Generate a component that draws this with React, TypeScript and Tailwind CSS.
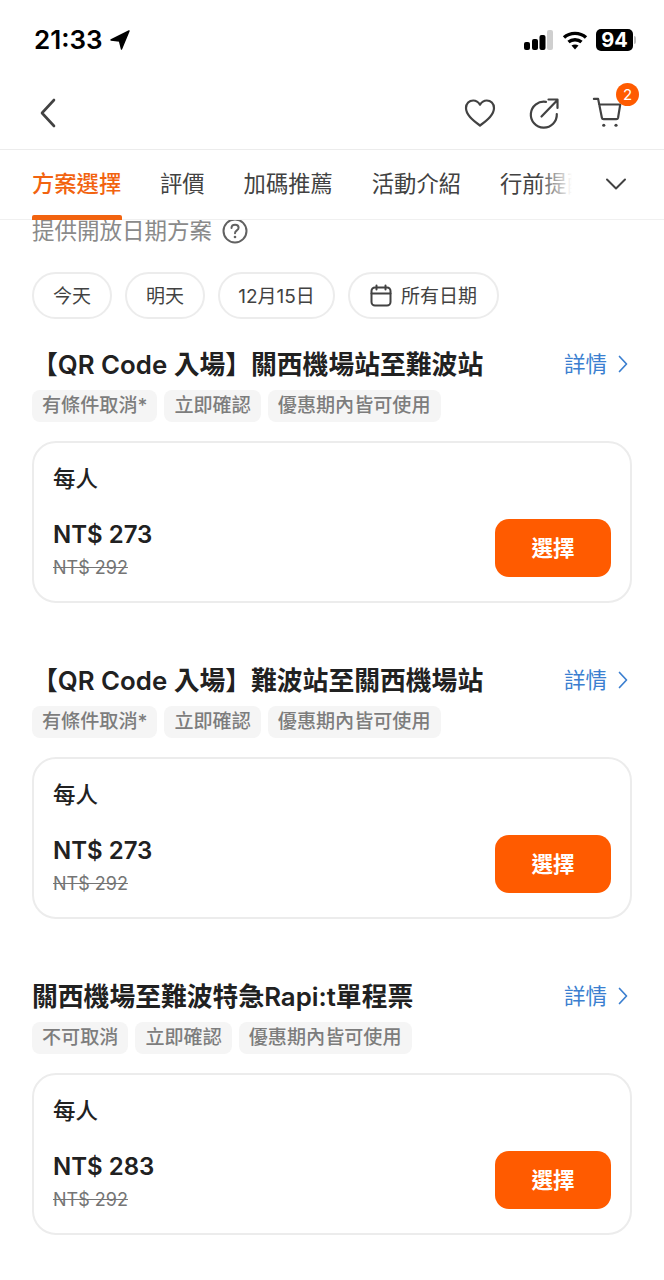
import React from "react";

function Plan({ title, tags, price }: { title: string; tags: string[]; price: string }) {
  return (
    <section className="h-[316px] px-8">
      <div className="flex h-[36px] items-center justify-between">
        <h2 className="text-[25.8px] leading-[36px] font-semibold text-[#212121] whitespace-nowrap">{title}</h2>
        <div className="mr-[4px] flex items-center gap-[11px] text-[#3b7fd0]">
          <span className="-mt-[2px] text-[21.5px] leading-[28px]">詳情</span>
          <svg className="-mt-[2px]" width="10" height="18" viewBox="0 0 10 18" fill="none" stroke="currentColor" strokeWidth="1.7" strokeLinecap="round" strokeLinejoin="round">
            <path d="M1.500 1.500 8.500 9l-7 7.500" />
          </svg>
        </div>
      </div>
      <div className="mt-[7px] flex gap-[7px]">
        {tags.map((t) => (
          <span key={t} className="flex h-[32px] items-center rounded-[8px] bg-[#f5f5f5] px-[10px] text-[19.1px] leading-none font-medium text-[#7d7d7d]">{t}</span>
        ))}
      </div>
      <div className="mt-[19px] flex h-[162px] flex-col rounded-[24px] border-2 border-[#ececec] px-[19px]">
        <div className="mt-[21px] text-[22.5px] leading-[30px] font-medium text-[#212121]">每人</div>
        <div className="mt-[24px] flex items-start justify-between">
          <div className="flex flex-col">
            <span className="mt-[1px] text-[24px] leading-[32px] font-semibold text-[#212121]">{price}</span>
            <span className="mt-[5px] text-[18px] leading-[24px] text-[#757575] line-through">NT$ 292</span>
          </div>
          <button className="mt-[1px] flex h-[58px] w-[116px] items-center justify-center rounded-[14px] bg-[#ff5b00] text-[21.5px] font-semibold text-white">選擇</button>
        </div>
      </div>
    </section>
  );
}

export default function App() {
  return (
    <div className="relative h-[1280px] w-[664px] overflow-hidden bg-white [font-family:Inter,'Noto_Sans_CJK_TC',sans-serif]">
      <div className="flex h-[72px] items-start justify-between pl-[34px] pr-[28px] pt-[22px]">
        <div className="flex items-center gap-[6px]">
          <span className="text-[26px] leading-[36px] font-semibold text-black">21:33</span>
          <svg width="22" height="22" viewBox="0 0 22 22" fill="#000" stroke="#000" strokeWidth="1.400" strokeLinejoin="round"><path d="M20 2 2 11l8.500 1L12.500 20z" /></svg>
        </div>
        <div className="flex items-center gap-[8px] pt-[7px]">
          <svg width="30" height="22" viewBox="0 0 30 22" fill="#000">
            <rect x="0" y="13" width="6" height="8" rx="2" />
            <rect x="8" y="10" width="6" height="11" rx="2" />
            <rect x="15.500" y="6" width="6" height="15" rx="2" />
            <rect x="23" y="1" width="6" height="20" rx="2" fill="#cfcfcf" />
          </svg>
          <svg width="26" height="20" viewBox="0 0 26 20" fill="none" stroke="#000" strokeWidth="3.400">
            <path d="M2 7.500c6-5.500 16-5.500 22 0" />
            <path d="M6.500 12c3.500-3 9.500-3 13 0" />
            <path d="M13 19.500 9.500 15.500c2-1.500 5-1.500 7 0z" fill="#000" stroke="none" />
          </svg>
          <div className="flex items-center">
            <div className="flex h-[22px] w-[37px] items-center justify-center rounded-[5px] bg-black text-[20px] leading-none font-bold text-white">94</div>
            <div className="ml-[1px] h-[8px] w-[2px] rounded-r-sm bg-[#bdbdbd]" />
          </div>
        </div>
      </div>

      <div className="flex h-[78px] items-center justify-between border-b border-[#ececec] pl-[38px] pr-[40px] pt-[4px]">
        <svg width="20" height="30" viewBox="0 0 20 30" fill="none" stroke="#424242" strokeWidth="2.600" strokeLinecap="round" strokeLinejoin="round">
          <path d="M16 2 4 15l12 13" />
        </svg>
        <div className="flex items-center gap-[32px]">
          <svg width="32" height="30" viewBox="0 0 32 30" fill="none" stroke="#424242" strokeWidth="2.200" strokeLinejoin="round">
            <path d="M16 27.500C8 21.500 2 16.500 2 10c0-4.500 3.300-7.500 7.200-7.500 2.800 0 5.200 1.500 6.800 4.200 1.600-2.700 4-4.200 6.800-4.200C26.700 2.500 30 5.500 30 10c0 6.500-6 11.500-14 17.500z" />
          </svg>
          <svg width="32" height="32" viewBox="0 0 32 32" fill="none" stroke="#424242" strokeWidth="2.200" strokeLinecap="round" strokeLinejoin="round">
            <path d="M18 4.800A13 13 0 1 0 28.800 17" />
            <path d="M13.500 19.500 29 3.500M20.500 2.500H29.500V11" />
          </svg>
          <div className="relative h-[32px] w-[32px]">
            <svg width="32" height="32" viewBox="0 0 34 34" fill="none" stroke="#424242" strokeWidth="2.300" strokeLinecap="round" strokeLinejoin="round">
              <path d="M2 2h4.500l4 20c.2 1 .9 1.500 1.800 1.500h13.500c1 0 1.700-.6 1.900-1.500L30 8H7.500" />
              <circle cx="12.500" cy="30" r="1.700" fill="#424242" stroke="none" />
              <circle cx="25.500" cy="30" r="1.700" fill="#424242" stroke="none" />
            </svg>
            <span className="absolute -right-[15px] -top-[14px] flex h-[23px] w-[23px] items-center justify-center rounded-full bg-[#ff5b00] text-[15px] leading-none text-white">2</span>
          </div>
        </div>
      </div>

      <div className="relative z-10 flex h-[70px] items-center border-b border-[#f0f0f0] bg-white pl-8 text-[22.3px] leading-none text-[#424242]">
        <div className="relative flex h-full w-[90px] items-center pb-[1px] font-medium whitespace-nowrap text-[#f2630f]">
          方案選擇
          <span className="absolute -bottom-px left-0 h-[5px] w-full rounded-t-[2px] bg-[#f2630f]" />
        </div>
        <span className="mb-[1px] ml-[38px]">評價</span>
        <span className="mb-[1px] ml-[39px]">加碼推薦</span>
        <span className="mb-[1px] ml-[39px]">活動介紹</span>
        <span className="relative mb-[1px] ml-[39px] w-[72px] overflow-hidden whitespace-nowrap">
          行前提醒
          <span className="absolute inset-y-0 right-0 w-[34px] bg-gradient-to-r from-transparent to-white" />
        </span>
        <svg className="ml-[33px] mb-[1px]" width="22" height="12" viewBox="0 0 22 12" fill="none" stroke="#424242" strokeWidth="2" strokeLinecap="round" strokeLinejoin="round">
          <path d="m2 1.500 9 9 9-9" />
        </svg>
      </div>

      <div className="-mt-[3px] flex items-center gap-[9px] pl-8 text-[22.5px] leading-[28px] text-[#8a8a8a]">
        <span>提供開放日期方案</span>
        <svg width="28" height="28" viewBox="0 0 28 28" fill="none" className="text-[#616161]" stroke="currentColor" strokeWidth="2">
          <circle cx="14" cy="14" r="11.500" />
          <path d="M10.500 11c0-2 1.600-3.300 3.600-3.300s3.500 1.200 3.500 3c0 2.700-3.600 2.700-3.600 5.600" strokeLinecap="round" />
          <circle cx="14" cy="20" r="1.300" fill="currentColor" stroke="none" />
        </svg>
      </div>

      <div className="mt-[27px] flex gap-[13px] pl-8 text-[19px] leading-none text-[#424242]">
        <span className="flex h-[47px] w-[80px] items-center justify-center rounded-full border-2 border-[#ececec] pt-px">今天</span>
        <span className="flex h-[47px] w-[80px] items-center justify-center rounded-full border-2 border-[#ececec] pt-px">明天</span>
        <span className="flex h-[47px] w-[117px] items-center justify-center rounded-full border-2 border-[#ececec] pt-px">12月15日</span>
        <span className="flex h-[47px] w-[151px] items-center justify-center gap-[9px] rounded-full border-2 border-[#ececec] pt-px">
          <svg width="22" height="24" viewBox="0 0 22 24" fill="none" stroke="#424242" strokeWidth="2" strokeLinecap="round">
            <rect x="1.500" y="3.500" width="19" height="18" rx="3.500" />
            <path d="M1.500 9.500h19M6.500 1.500v4M15.500 1.500v4" />
          </svg>
          所有日期
        </span>
      </div>

      <div className="mt-[28px]">
        <Plan title="【QR Code 入場】關西機場站至難波站" tags={["有條件取消*", "立即確認", "優惠期內皆可使用"]} price="NT$ 273" />
        <Plan title="【QR Code 入場】難波站至關西機場站" tags={["有條件取消*", "立即確認", "優惠期內皆可使用"]} price="NT$ 273" />
        <Plan title="關西機場至難波特急Rapi:t單程票" tags={["不可取消", "立即確認", "優惠期內皆可使用"]} price="NT$ 283" />
      </div>
    </div>
  );
}
